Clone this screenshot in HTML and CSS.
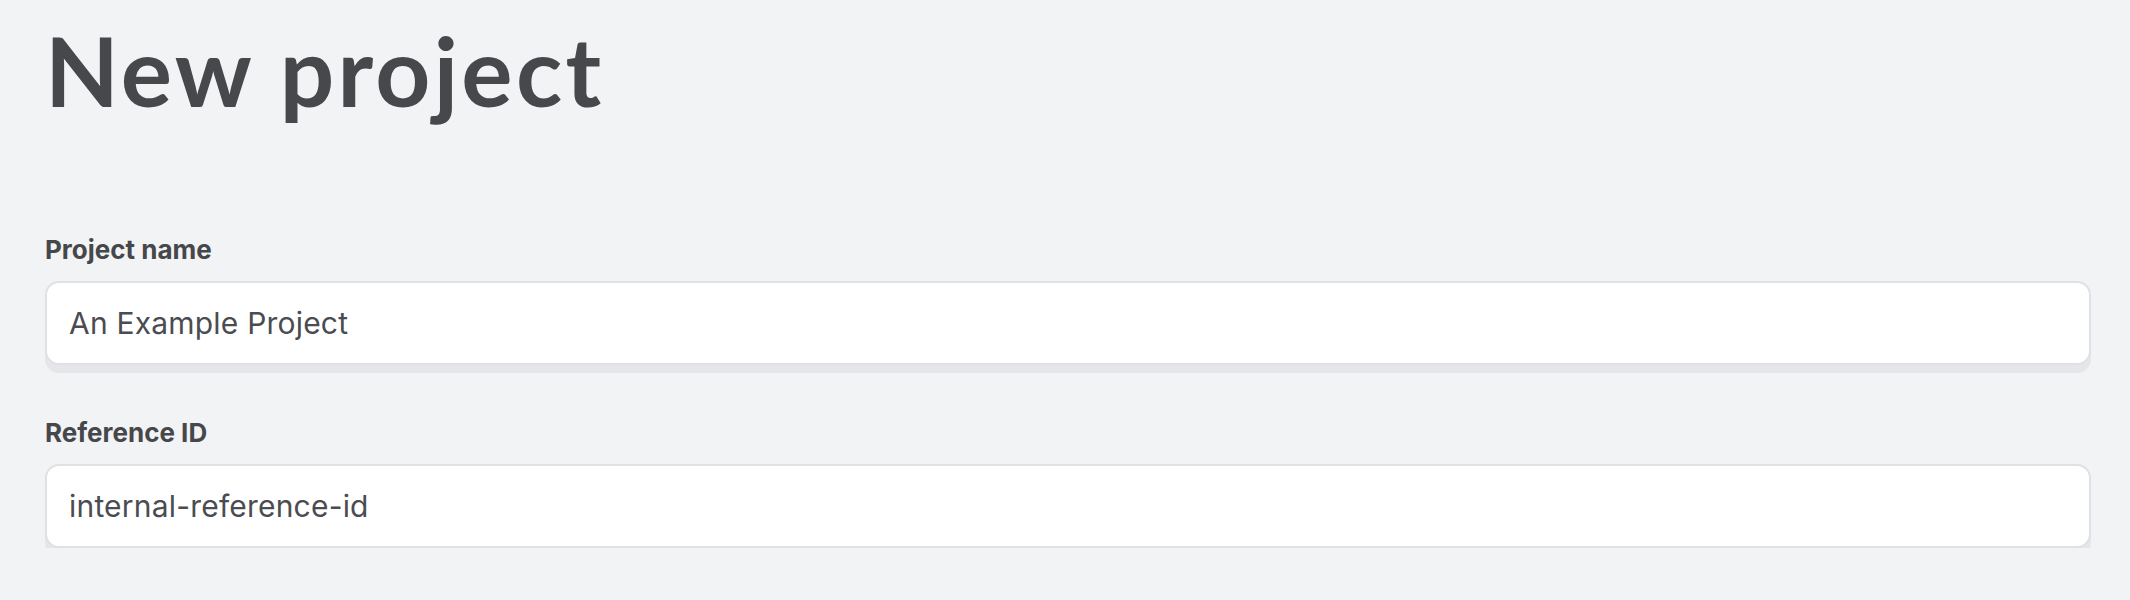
FILE: index.html
```html
<!DOCTYPE html>
<html lang="en">
<head>
<meta charset="utf-8">
<title>New project</title>
<link rel="stylesheet" href="styles.css">
</head>
<body>
<main class="page">
  <h1 class="title">New project</h1>
  <form class="form">
    <div class="field">
      <label class="field-label" for="project-name">Project name</label>
      <input class="field-input" id="project-name" type="text" value="An Example Project">
    </div>
    <div class="field">
      <label class="field-label" for="reference-id">Reference ID</label>
      <input class="field-input" id="reference-id" type="text" value="internal-reference-id">
    </div>
  </form>
</main>
</body>
</html>
```

FILE: styles.css
```css
html, body {
  margin: 0;
  padding: 0;
  background: #f2f3f5;
}

.page {
  padding: 12px 39px 0 45px;
  display: flex;
  flex-direction: column;
}

.title {
  margin: 0 0 106px 0;
  font-family: Lato, "Liberation Sans", sans-serif;
  font-weight: 700;
  font-size: 96px;
  line-height: 116px;
  letter-spacing: 3.3px;
  color: #47484c;
}

.form {
  display: flex;
  flex-direction: column;
  gap: 52px;
}

.field {
  display: flex;
  flex-direction: column;
}

.field-label {
  font-family: Inter, "Liberation Sans", sans-serif;
  font-weight: 700;
  font-size: 26px;
  line-height: 32px;
  color: #46474b;
  margin-bottom: 15px;
}

.field-input {
  box-sizing: border-box;
  height: 84px;
  width: 100%;
  margin: 0;
  padding: 0 22px;
  border: 2px solid #e0e1e5;
  border-radius: 14px;
  background: #ffffff;
  box-shadow: 0 8px 0 0 #e5e6e9;
  font-family: Inter, "Liberation Sans", sans-serif;
  font-weight: 400;
  font-size: 30px;
  letter-spacing: 0.2px;
  color: #4b4c51;
  outline: none;
}
```
